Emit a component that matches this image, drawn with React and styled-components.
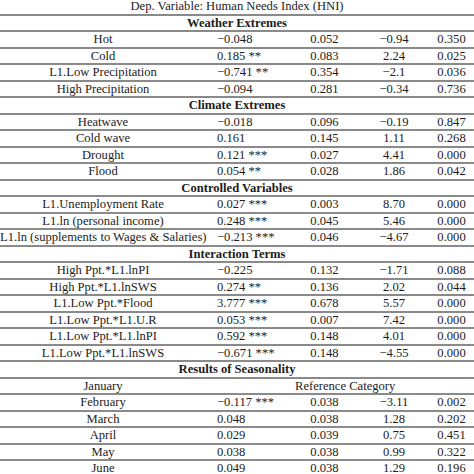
import React from 'react';
import styled, { createGlobalStyle } from 'styled-components';

const GlobalStyle = createGlobalStyle`
  html, body {
    margin: 0;
    padding: 0;
    background: #ffffff;
    overflow: hidden;
  }
`;

const Page = styled.div`
  width: 474px;
  height: 474px;
  overflow: hidden;
  background: #fff;
`;

const Table = styled.table`
  width: 474px;
  margin-top: -1px;
  border-collapse: separate;
  border-spacing: 0;
  table-layout: fixed;
  font-family: "Liberation Serif", "DejaVu Serif", serif;
  font-size: 12.6px;
  color: #1c1c1c;
`;

const Cell = styled.td`
  height: 14.5px;
  line-height: 14.5px;
  padding: 0;
  border-bottom: 2px solid #8a8a8a;
  white-space: nowrap;
  overflow: visible;
`;

const Label = styled(Cell)`
  text-align: center;
`;

const Coef = styled(Cell)`
  text-align: left;
  padding-left: 11px;
`;

const Num = styled(Cell)`
  text-align: center;
`;

const Span = styled(Cell)`
  text-align: ${p => (p.$align || 'center')};
  padding-left: ${p => p.$pad || 0}px;
  font-weight: ${p => (p.$bold ? 700 : 400)};
`;

const rows = [
  { title: 'Weather Extremes' },
  ['Hot', '−0.048', '', '0.052', '−0.94', '0.350'],
  ['Cold', '0.185', '**', '0.083', '2.24', '0.025'],
  ['L1.Low Precipitation', '−0.741', '**', '0.354', '−2.1', '0.036'],
  ['High Precipitation', '−0.094', '', '0.281', '−0.34', '0.736'],
  { title: 'Climate Extremes' },
  ['Heatwave', '−0.018', '', '0.096', '−0.19', '0.847'],
  ['Cold wave', '0.161', '', '0.145', '1.11', '0.268'],
  ['Drought', '0.121', '***', '0.027', '4.41', '0.000'],
  ['Flood', '0.054', '**', '0.028', '1.86', '0.042'],
  { title: 'Controlled Variables' },
  ['L1.Unemployment Rate', '0.027', '***', '0.003', '8.70', '0.000'],
  ['L1.ln (personal income)', '0.248', '***', '0.045', '5.46', '0.000'],
  ['L1.ln (supplements to Wages & Salaries)', '−0.213', '***', '0.046', '−4.67', '0.000'],
  { title: 'Interaction Terms' },
  ['High Ppt.*L1.lnPI', '−0.225', '', '0.132', '−1.71', '0.088'],
  ['High Ppt.*L1.lnSWS', '0.274', '**', '0.136', '2.02', '0.044'],
  ['L1.Low Ppt.*Flood', '3.777', '***', '0.678', '5.57', '0.000'],
  ['L1.Low Ppt.*L1.U.R', '0.053', '***', '0.007', '7.42', '0.000'],
  ['L1.Low Ppt.*L1.lnPI', '0.592', '***', '0.148', '4.01', '0.000'],
  ['L1.Low Ppt.*L1.lnSWS', '−0.671', '***', '0.148', '−4.55', '0.000'],
  { title: 'Results of Seasonality' },
  { reference: 'January' },
  ['February', '−0.117', '***', '0.038', '−3.11', '0.002'],
  ['March', '0.048', '', '0.038', '1.28', '0.202'],
  ['April', '0.029', '', '0.039', '0.75', '0.451'],
  ['May', '0.038', '', '0.038', '0.99', '0.322'],
  ['June', '0.049', '', '0.038', '1.29', '0.196'],
];

export default function App() {
  return (
    <Page>
      <GlobalStyle />
      <Table>
        <colgroup>
          <col style={{ width: 206 }} />
          <col style={{ width: 84 }} />
          <col style={{ width: 69 }} />
          <col style={{ width: 70 }} />
          <col style={{ width: 45 }} />
        </colgroup>
        <tbody>
          <tr>
            <Span colSpan={5}>Dep. Variable: Human Needs Index (HNI)</Span>
          </tr>
          {rows.map((r, i) => {
            if (r.title) {
              return (
                <tr key={i}>
                  <Span colSpan={5} $bold>{r.title}</Span>
                </tr>
              );
            }
            if (r.reference) {
              return (
                <tr key={i}>
                  <Label>{r.reference}</Label>
                  <Cell />
                  <Span colSpan={2} $align="left" $pad={5}>Reference Category</Span>
                  <Cell />
                </tr>
              );
            }
            const [name, coef, stars, se, z, p] = r;
            return (
              <tr key={i}>
                <Label>{name}</Label>
                <Coef>{coef}{stars ? ` ${stars}` : ''}</Coef>
                <Num>{se}</Num>
                <Num>{z}</Num>
                <Num>{p}</Num>
              </tr>
            );
          })}
        </tbody>
      </Table>
    </Page>
  );
}
